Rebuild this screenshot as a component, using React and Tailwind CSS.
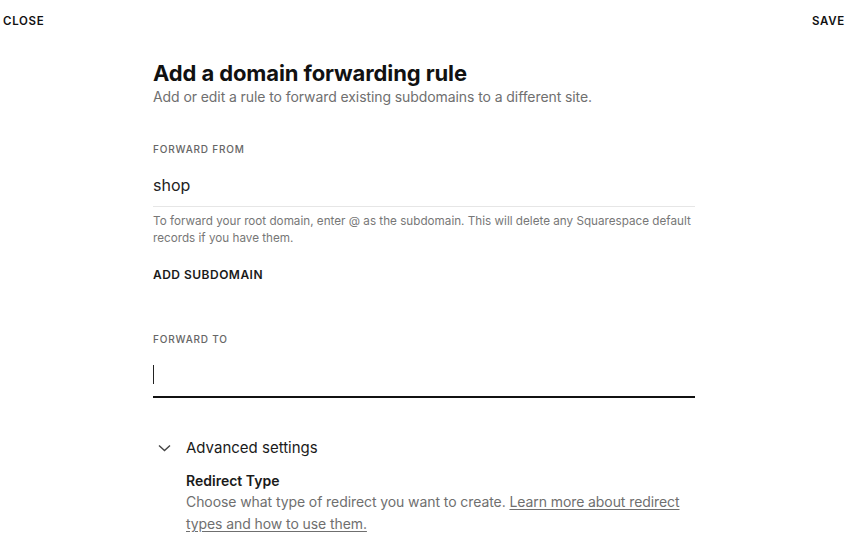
export default function App() {
  return (
    <div
      className="min-h-[551px] bg-white text-[#1a1a1a]"
      style={{ fontFamily: "Inter, 'Liberation Sans', sans-serif" }}
    >
      {/* Top bar */}
      <div className="flex items-center justify-between pl-[3px] pr-[7px] pt-[2px] h-[40px]">
        <button className="text-[11.5px] leading-[14px] font-semibold tracking-[0.06em] text-[#111]">CLOSE</button>
        <button className="text-[11.5px] leading-[14px] font-semibold tracking-[0.06em] text-[#111]">SAVE</button>
      </div>

      <div className="w-[542px] ml-[153px]">
        <h1 className="mt-[19px] text-[22px] leading-[28px] font-bold tracking-[-0.005em] text-[#111]">
          Add a domain forwarding rule
        </h1>
        <p className="text-[14px] leading-[20px] tracking-[-0.006em] text-[#6f6f6f]">
          Add or edit a rule to forward existing subdomains to a different site.
        </p>

        {/* Forward from */}
        <div className="mt-[35px] text-[10px] leading-[14px] font-medium tracking-[0.08em] text-[#666]">
          FORWARD FROM
        </div>
        <div className="h-[44px] flex items-center border-b border-[#e6e6e6] mt-[7px] pt-[1px]">
          <span className="text-[16px] text-[#222]">shop</span>
        </div>
        <p className="mt-[6px] text-[11.7px] leading-[17px] text-[#777]">
          To forward your root domain, enter @ as the subdomain. This will delete any Squarespace default
          records if you have them.
        </p>
        <button className="mt-[20px] block text-[12px] leading-[16px] font-semibold tracking-[0.04em] text-[#1a1a1a]">
          ADD SUBDOMAIN
        </button>

        {/* Forward to */}
        <div className="mt-[49px] text-[10px] leading-[14px] font-medium tracking-[0.08em] text-[#666]">
          FORWARD TO
        </div>
        <div className="h-[52px] flex items-center border-b-2 border-[#111] pt-[6px]">
          <div className="w-px h-[19px] bg-[#222]" />
        </div>

        {/* Advanced settings */}
        <div className="mt-[39px] flex items-center h-[22px]">
          <svg width="13" height="8" viewBox="0 0 13 8" className="ml-[5px] mr-[15px]">
            <path d="M1 1.5 L6.5 6.5 L12 1.5" fill="none" stroke="#444" strokeWidth="1.4" />
          </svg>
          <span className="text-[15px] text-[#1a1a1a]">Advanced settings</span>
        </div>
        <div className="ml-[33px]">
          <div className="mt-[12px] text-[14px] leading-[20px] font-semibold text-[#1a1a1a]">Redirect Type</div>
          <p className="text-[14px] leading-[22px] tracking-[-0.006em] text-[#6f6f6f]">
            Choose what type of redirect you want to create.{" "}
            <a className="underline underline-offset-2 text-[#6f6f6f]">
              Learn more about redirect types and how to use them.
            </a>
          </p>
        </div>
      </div>
    </div>
  );
}
